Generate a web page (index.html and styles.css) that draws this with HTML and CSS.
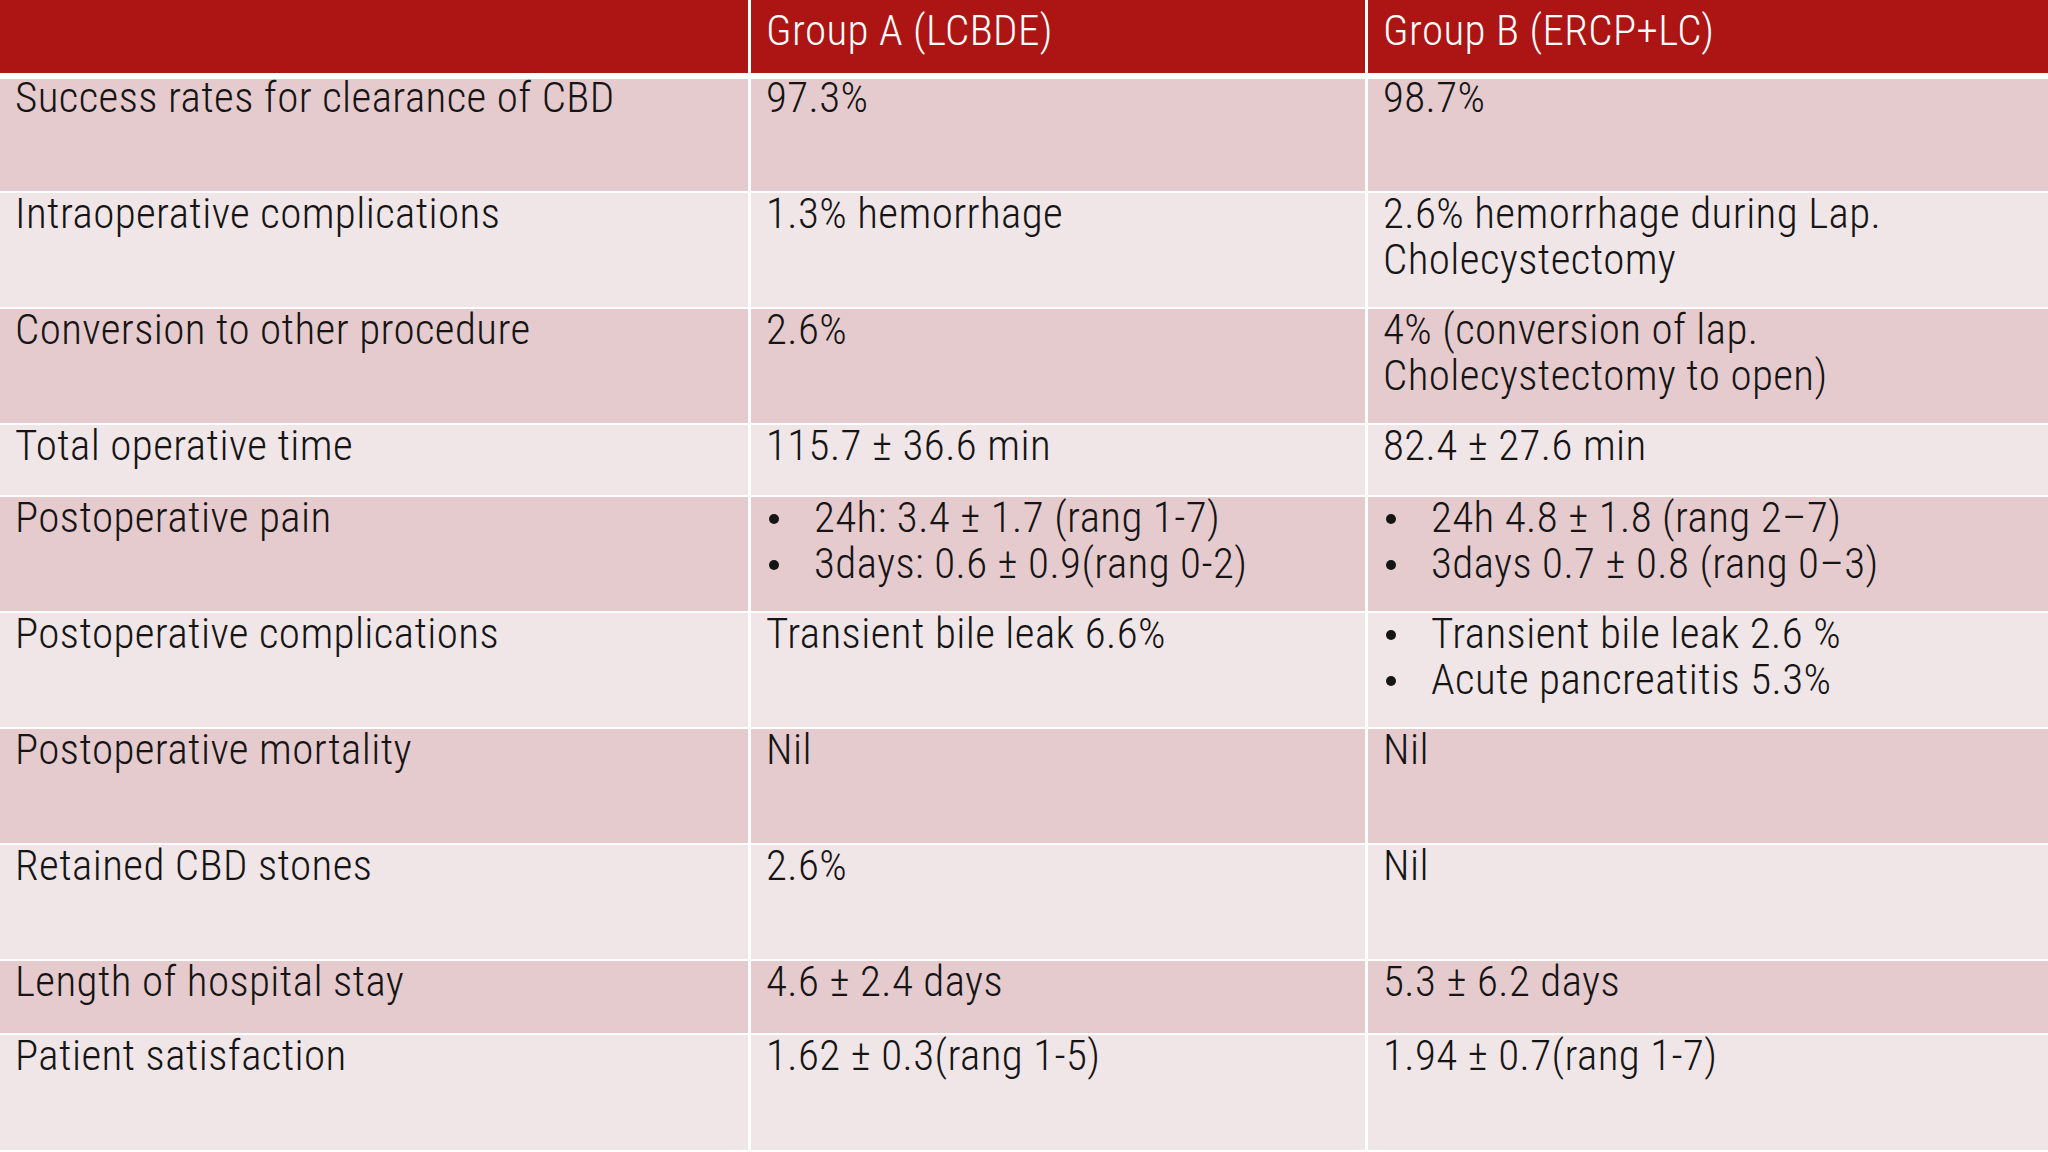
FILE: index.html
```html
<!DOCTYPE html>
<html lang="en">
<head>
<meta charset="utf-8">
<title>LCBDE vs ERCP+LC</title>
<link rel="stylesheet" href="styles.css">
</head>
<body>
<div class="table">
  <div class="row head">
    <div class="cell"></div>
    <div class="cell"><div class="v">Group A (LCBDE)</div></div>
    <div class="cell"><div class="v">Group B (ERCP+LC)</div></div>
  </div>
  <div class="row odd first">
    <div class="cell"><div class="v">Success rates for clearance of CBD</div></div>
    <div class="cell"><div class="v">97.3%</div></div>
    <div class="cell"><div class="v">98.7%</div></div>
  </div>
  <div class="row even tall">
    <div class="cell"><div class="v">Intraoperative complications</div></div>
    <div class="cell"><div class="v">1.3% hemorrhage</div></div>
    <div class="cell"><div class="v">2.6% hemorrhage during Lap.<br>Cholecystectomy</div></div>
  </div>
  <div class="row odd tall">
    <div class="cell"><div class="v">Conversion to other procedure</div></div>
    <div class="cell"><div class="v">2.6%</div></div>
    <div class="cell"><div class="v">4% (conversion of lap.<br>Cholecystectomy to open)</div></div>
  </div>
  <div class="row even short">
    <div class="cell"><div class="v">Total operative time</div></div>
    <div class="cell"><div class="v">115.7 ± 36.6 min</div></div>
    <div class="cell"><div class="v">82.4 ± 27.6 min</div></div>
  </div>
  <div class="row odd tall">
    <div class="cell"><div class="v">Postoperative pain</div></div>
    <div class="cell"><ul class="v list"><li>24h: 3.4 ± 1.7 (rang 1-7)</li><li>3days: 0.6 ± 0.9(rang 0-2)</li></ul></div>
    <div class="cell"><ul class="v list"><li>24h 4.8 ± 1.8 (rang 2–7)</li><li>3days 0.7 ± 0.8 (rang 0–3)</li></ul></div>
  </div>
  <div class="row even tall">
    <div class="cell"><div class="v">Postoperative complications</div></div>
    <div class="cell"><div class="v">Transient bile leak 6.6%</div></div>
    <div class="cell"><ul class="v list"><li>Transient bile leak 2.6 %</li><li>Acute pancreatitis 5.3%</li></ul></div>
  </div>
  <div class="row odd tall">
    <div class="cell"><div class="v">Postoperative mortality</div></div>
    <div class="cell"><div class="v">Nil</div></div>
    <div class="cell"><div class="v">Nil</div></div>
  </div>
  <div class="row even tall">
    <div class="cell"><div class="v">Retained CBD stones</div></div>
    <div class="cell"><div class="v">2.6%</div></div>
    <div class="cell"><div class="v">Nil</div></div>
  </div>
  <div class="row odd short2">
    <div class="cell"><div class="v">Length of hospital stay</div></div>
    <div class="cell"><div class="v">4.6 ± 2.4 days</div></div>
    <div class="cell"><div class="v">5.3 ± 6.2 days</div></div>
  </div>
  <div class="row even last">
    <div class="cell"><div class="v">Patient satisfaction</div></div>
    <div class="cell"><div class="v">1.62 ± 0.3(rang 1-5)</div></div>
    <div class="cell"><div class="v">1.94 ± 0.7(rang 1-7)</div></div>
  </div>
</div>
</body>
</html>
```
FILE: styles.css
```css
html, body {
  margin: 0;
  padding: 0;
  background: #ffffff;
}

body {
  font-family: "Roboto Condensed", "Liberation Sans", sans-serif;
  font-weight: 300;
  font-size: 43px;
  line-height: 46px;
  letter-spacing: 0.4px;
  color: #151515;
}

.table {
  display: flex;
  flex-direction: column;
  gap: 2px;
  height: 1150px;
  width: 2048px;
}

.row {
  display: grid;
  grid-template-columns: 748px 614px 1fr;
  column-gap: 3px;
  flex: none;
}

.cell {
  padding: 0 12px 0 15px;
}

.v {
  margin-top: -3px;
}

.head {
  height: 73px;
  margin-bottom: 4px;
}

.head .cell {
  background: #ad1515;
  color: #ffffff;
  padding-top: 10px;
}

.first { height: 112px; }
.first .v { margin-top: -5px; }
.tall { height: 114px; }
.short { height: 70px; }
.short2 { height: 72px; }
.last { flex: 1 1 auto; }

.odd .cell { background: #e5cbce; }
.even .cell { background: #f0e5e7; }

.list {
  list-style: none;
  margin-bottom: 0;
  padding: 0;
}

.list li {
  display: flex;
}

.list li::before {
  content: "";
  flex: none;
  width: 10px;
  height: 10px;
  border-radius: 50%;
  background: #151515;
  margin: 20px 35px 0 3px;
}
```
